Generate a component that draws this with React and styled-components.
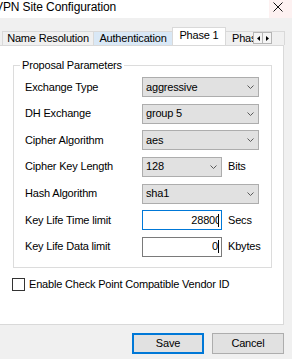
import React from 'react';
import styled, { createGlobalStyle } from 'styled-components';

const Global = createGlobalStyle`
  html, body { margin: 0; padding: 0; background: #f0f0f0; }
  body {
    font-family: "Liberation Sans", Arial, sans-serif;
    font-size: 11px;
    letter-spacing: -0.18px;
    color: #000;
  }
`;

const Window = styled.div`
  width: 292px;
  height: 359px;
  overflow: hidden;
  background: #f0f0f0;
  display: flex;
  flex-direction: column;
`;

const TitleBar = styled.div`
  height: 18px;
  flex-shrink: 0;
  background: #fff;
  display: flex;
  align-items: flex-start;
`;

const Title = styled.div`
  flex: 1;
  margin-left: -5px;
  font-size: 12px;
  line-height: 14px;
  letter-spacing: -0.1px;
  white-space: nowrap;
`;

const CloseBtn = styled.div`
  width: 23px;
  height: 18px;
  background: #fdf1f1;
  padding: 2px 0 0 4px;
  box-sizing: border-box;
`;

const TabStrip = styled.div`
  position: relative;
  height: 27px;
  flex-shrink: 0;
  display: flex;
  align-items: flex-end;
  padding-left: 2px;
  overflow: hidden;
`;

const Tab = styled.div`
  box-sizing: border-box;
  width: ${p => p.$width}px;
  flex-shrink: 0;
  height: ${p => (p.$selected ? 19 : 14)}px;
  margin-bottom: ${p => (p.$selected ? -1 : 0)}px;
  margin-left: -1px;
  border: 1px solid #d9d9d9;
  border-bottom: none;
  background: ${p => (p.$selected ? '#fff' : p.$hover ? '#d9e8f6' : '#f0f0f0')};
  position: relative;
  z-index: ${p => (p.$selected ? 2 : 1)};
  display: flex;
  align-items: center;
  justify-content: ${p => (p.$left ? 'flex-start' : 'center')};
  padding-left: ${p => (p.$left ? 6 : 0)}px;
  padding-bottom: ${p => (p.$selected ? 3 : 0)}px;
  white-space: nowrap;
  line-height: 13px;
  &:first-child { margin-left: 0; }
`;

const Scroller = styled.div`
  position: absolute;
  right: 20px;
  top: 14px;
  display: flex;
  z-index: 3;
`;

const ScrollBtn = styled.div`
  box-sizing: border-box;
  width: 10px;
  height: 12px;
  margin-left: -1px;
  border: 1px solid #b5b5b5;
  background: #f5f5f5;
  display: flex;
  align-items: center;
  justify-content: center;
`;

const Panel = styled.div`
  box-sizing: border-box;
  width: 285px;
  height: 280px;
  margin-left: -1px;
  flex-shrink: 0;
  background: #fff;
  border: 1px solid #d9d9d9;
  display: flex;
  flex-direction: column;
`;

const GroupBox = styled.div`
  position: relative;
  box-sizing: border-box;
  width: 259px;
  height: 203px;
  margin: 19px 0 0 13px;
  border: 1px solid #dcdcdc;
  padding: 11px 0 0 11px;
`;

const Legend = styled.span`
  position: absolute;
  left: 6px;
  top: -7px;
  padding: 0 2px;
  background: #fff;
  line-height: 13px;
  white-space: nowrap;
`;

const Grid = styled.div`
  display: grid;
  grid-template-columns: 117px 1fr;
  grid-auto-rows: 20px;
  row-gap: 6.67px;
  align-items: center;
`;

const Label = styled.div`
  white-space: nowrap;
  line-height: 13px;
`;

const Field = styled.div`
  display: flex;
  align-items: center;
  height: 20px;
`;

const Select = styled.div`
  box-sizing: border-box;
  width: ${p => (p.$narrow ? 80 : 117)}px;
  height: 20px;
  border: 1px solid #adadad;
  background: #e1e1e1;
  display: flex;
  align-items: center;
  justify-content: space-between;
  padding: 0 4px 0 3px;
`;

const Value = styled.span`
  line-height: 13px;
  white-space: nowrap;
`;

const TextBox = styled.div`
  box-sizing: border-box;
  width: 80px;
  height: 20px;
  border: 1px solid ${p => (p.$focused ? '#0078d7' : '#7a7a7a')};
  background: #fff;
  display: flex;
  align-items: center;
`;

const Clip = styled.div`
  flex: 1;
  overflow: hidden;
  display: flex;
  justify-content: flex-end;
`;

const Digits = styled.span`
  line-height: 13px;
  white-space: nowrap;
  margin-right: ${p => p.$shift}px;
`;

const Caret = styled.div`
  width: 1px;
  height: 13px;
  background: #000;
  margin-right: 2px;
  flex-shrink: 0;
`;

const Unit = styled.span`
  margin-left: 6px;
  line-height: 13px;
  white-space: nowrap;
`;

const CheckRow = styled.div`
  display: flex;
  align-items: center;
  margin: 10px 0 0 12px;
  height: 13px;
`;

const Box = styled.div`
  box-sizing: border-box;
  width: 13px;
  height: 13px;
  border: 1px solid #333;
  background: #fff;
  flex-shrink: 0;
`;

const CheckLabel = styled.span`
  margin-left: 4px;
  line-height: 13px;
  white-space: nowrap;
`;

const ButtonRow = styled.div`
  display: flex;
  justify-content: flex-end;
  gap: 8px;
  padding-right: 8px;
  margin-top: 8px;
`;

const Button = styled.div`
  box-sizing: border-box;
  width: 72px;
  height: 21px;
  border: ${p => (p.$default ? '2px solid #0078d7' : '1px solid #adadad')};
  background: #e1e1e1;
  display: flex;
  align-items: center;
  justify-content: center;
  line-height: 13px;
`;

const Chevron = () => (
  <svg width="7" height="4" viewBox="0 0 7 4">
    <polyline points="0.5,0.5 3.5,3.5 6.5,0.5" fill="none" stroke="#5a5a5a" strokeWidth="1" />
  </svg>
);

const CloseIcon = () => (
  <svg width="10" height="10" viewBox="0 0 10 10">
    <path d="M0.5 0.5 L9.5 9.5 M9.5 0.5 L0.5 9.5" stroke="#111" strokeWidth="1" fill="none" />
  </svg>
);

const Arrow = ({ dir }) => (
  <svg width="3" height="5" viewBox="0 0 3 5">
    {dir === 'left' ? <polygon points="3,0 3,5 0,2.5" fill="#000" /> : <polygon points="0,0 0,5 3,2.5" fill="#000" />}
  </svg>
);

const rows = [
  { label: 'Exchange Type', kind: 'select', value: 'aggressive' },
  { label: 'DH Exchange', kind: 'select', value: 'group 5' },
  { label: 'Cipher Algorithm', kind: 'select', value: 'aes' },
  { label: 'Cipher Key Length', kind: 'select', value: '128', narrow: true, unit: 'Bits' },
  { label: 'Hash Algorithm', kind: 'select', value: 'sha1' },
  { label: 'Key Life Time limit', kind: 'text', value: '28800', unit: 'Secs', focused: true, shift: -3 },
  { label: 'Key Life Data limit', kind: 'text', value: '0', unit: 'Kbytes', shift: 0 },
];

export default function App() {
  return (
    <>
      <Global />
      <Window>
        <TitleBar>
          <Title>VPN Site Configuration</Title>
          <CloseBtn><CloseIcon /></CloseBtn>
        </TitleBar>
        <TabStrip>
          <Tab $width={92}>Name Resolution</Tab>
          <Tab $width={80} $hover>Authentication</Tab>
          <Tab $width={54} $selected>Phase 1</Tab>
          <Tab $width={60} $left>Phase 2</Tab>
          <Scroller>
            <ScrollBtn><Arrow dir="left" /></ScrollBtn>
            <ScrollBtn><Arrow dir="right" /></ScrollBtn>
          </Scroller>
        </TabStrip>
        <Panel>
          <GroupBox>
            <Legend>Proposal Parameters</Legend>
            <Grid>
              {rows.map(r => (
                <React.Fragment key={r.label}>
                  <Label>{r.label}</Label>
                  <Field>
                    {r.kind === 'select' ? (
                      <Select $narrow={r.narrow}>
                        <Value>{r.value}</Value>
                        <Chevron />
                      </Select>
                    ) : (
                      <TextBox $focused={r.focused}>
                        <Clip><Digits $shift={r.shift}>{r.value}</Digits></Clip>
                        <Caret />
                      </TextBox>
                    )}
                    {r.unit && <Unit>{r.unit}</Unit>}
                  </Field>
                </React.Fragment>
              ))}
            </Grid>
          </GroupBox>
          <CheckRow>
            <Box />
            <CheckLabel>Enable Check Point Compatible Vendor ID</CheckLabel>
          </CheckRow>
        </Panel>
        <ButtonRow>
          <Button $default>Save</Button>
          <Button>Cancel</Button>
        </ButtonRow>
      </Window>
    </>
  );
}
